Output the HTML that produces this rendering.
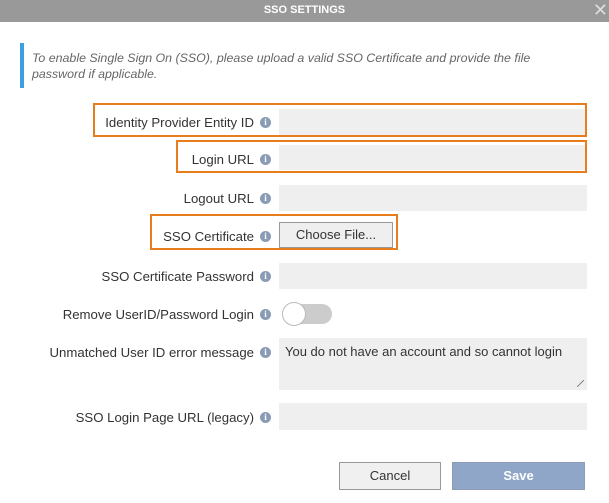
<!DOCTYPE html>
<html><head><style>
body{margin:0;width:609px;height:503px;background:#fff;font-family:"Liberation Sans",sans-serif;position:relative;overflow:hidden;color:#333}
.a{position:absolute}
.hdr{left:0;top:0;width:609px;height:22px;background:#999;color:#fff;font-weight:bold;font-size:11px;text-align:center;line-height:20px}
.lbl{font-size:13.2px;text-align:right;width:254px;left:0}
.ic{width:11px;height:11px;border-radius:50%;background:#8a9bb5;color:#fff;font-size:9px;font-weight:bold;text-align:center;line-height:11px;font-family:"Liberation Serif",serif}
.in{left:279px;width:308px;background:#efefef}
.ob{border:2px solid #e87d1e;box-sizing:border-box}
</style></head><body>
<div class="a hdr">SSO SETTINGS</div>
<div class="a" style="right:1px;top:1px;color:#ddd;font-size:18px;line-height:18px">✕</div>
<div class="a" style="left:20px;top:43px;width:4px;height:45px;background:#3b9fe0"></div>
<div class="a" style="left:32px;top:50px;font-size:12.4px;font-style:italic;color:#666;line-height:16px;width:545px">To enable Single Sign On (SSO), please upload a valid SSO Certificate and provide the file password if applicable.</div>

<div class="a ob" style="left:93px;top:103px;width:494px;height:34px"></div>
<div class="a in" style="top:109px;height:26px;width:306px"></div>
<div class="a lbl" style="top:115px">Identity Provider Entity ID</div>
<div class="a ic" style="left:260px;top:117px">i</div>

<div class="a ob" style="left:176px;top:140px;width:411px;height:33px"></div>
<div class="a in" style="top:145px;height:25px;width:306px"></div>
<div class="a lbl" style="top:152px">Login URL</div>
<div class="a ic" style="left:260px;top:154px">i</div>

<div class="a in" style="top:185px;height:26px"></div>
<div class="a lbl" style="top:191px">Logout URL</div>
<div class="a ic" style="left:260px;top:193px">i</div>

<div class="a ob" style="left:150px;top:214px;width:248px;height:36px"></div>
<div class="a" style="left:279px;top:222px;width:114px;height:26px;background:#efefef;border:1px solid #999;box-sizing:border-box;font-size:13px;text-align:center;line-height:24px">Choose File...</div>
<div class="a lbl" style="top:229px">SSO Certificate</div>
<div class="a ic" style="left:260px;top:231px">i</div>

<div class="a in" style="top:263px;height:26px"></div>
<div class="a lbl" style="top:269px">SSO Certificate Password</div>
<div class="a ic" style="left:260px;top:271px">i</div>

<div class="a" style="left:283px;top:304px;width:49px;height:20px;border-radius:10px;background:#ccc"></div>
<div class="a" style="left:282px;top:302px;width:22px;height:22px;border-radius:50%;background:#fff;border:1px solid #bbb"></div>
<div class="a lbl" style="top:307px">Remove UserID/Password Login</div>
<div class="a ic" style="left:260px;top:309px">i</div>

<div class="a in" style="top:338px;height:52px"></div>
<div class="a" style="left:285px;top:344px;font-size:13px">You do not have an account and so cannot login</div>
<div class="a" style="left:577px;top:380px;width:7px;height:7px;background:linear-gradient(135deg,transparent 45%,#888 45%,#888 55%,transparent 55%)"></div>
<div class="a lbl" style="top:345px">Unmatched User ID error message</div>
<div class="a ic" style="left:260px;top:347px">i</div>

<div class="a in" style="top:403px;height:27px"></div>
<div class="a lbl" style="top:410px">SSO Login Page URL (legacy)</div>
<div class="a ic" style="left:260px;top:412px">i</div>

<div class="a" style="left:339px;top:462px;width:102px;height:28px;background:#f0f0f0;border:1px solid #999;box-sizing:border-box;font-size:13px;text-align:center;line-height:26px">Cancel</div>
<div class="a" style="left:452px;top:462px;width:133px;height:28px;background:#8fa6c8;border:1px solid #8a9cb6;box-sizing:border-box;font-size:13px;font-weight:bold;color:#fff;text-align:center;line-height:26px">Save</div>
</body></html>
